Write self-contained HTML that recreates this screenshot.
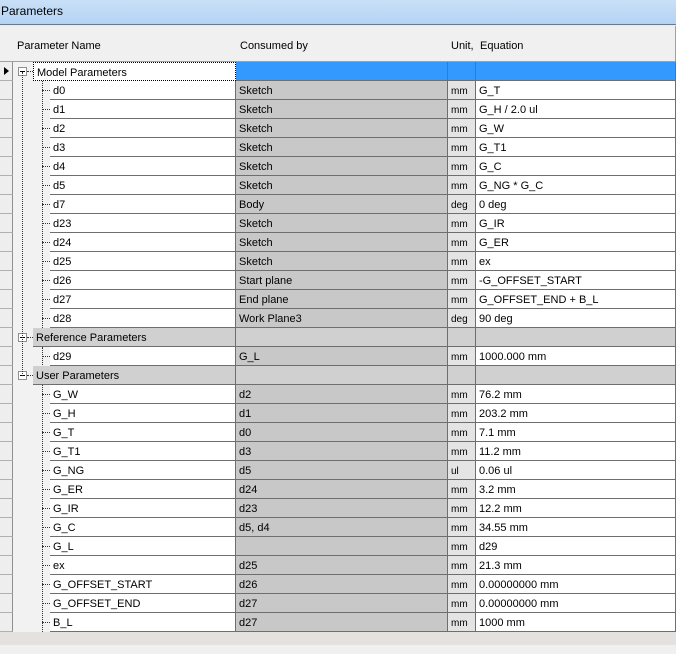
<!DOCTYPE html>
<html><head><meta charset="utf-8"><style>
*{box-sizing:border-box;margin:0;padding:0}
body{width:676px;height:654px;overflow:hidden;background:#ece9e4;font-family:"Liberation Sans",sans-serif;font-size:11px;color:#000;position:relative}
.title{position:absolute;left:0;top:0;width:676px;height:25px;background:linear-gradient(#c9e0f7,#b4d3f4);border-bottom:1px solid #6a7a8a;font-size:12px;padding:4px 0 0 1px}
.hdr{position:absolute;top:26px;height:36px;background:#f0f0f0;border-right:1px solid #a0a0a0;border-bottom:1px solid #a0a0a0;padding:14px 0 0 4px}
.rh{position:absolute;left:0;width:13px;height:19px;background:#eeeeee;border-bottom:1px solid #b0b0b0;border-right:1px solid #909090}
.tree{position:absolute;left:13px;top:62px;width:38px;height:570px;background:#f2f2f2}
.c{position:absolute;height:19px;border-right:1px solid #6e6e6e;border-bottom:1px solid #6e6e6e;padding:4px 0 0 3px;white-space:nowrap;overflow:hidden}
.n{background:#fff}
.cb{background:#c8c8c8}
.u{background:#e4e4e4;font-size:10px;padding-top:5px}
.e{background:#fff}
.g{background:#d0d0d0}
.sel{background:#3399ff}
.dl{position:absolute;border-left:1px dotted #333}
.dh{position:absolute;border-top:1px dotted #333;height:0}
.box{position:absolute;width:9px;height:9px;border:1px solid #909090;background:#fff}
.box:after{content:"";position:absolute;left:1px;top:3px;width:5px;height:1px;background:#000}
.bot{position:absolute;left:0;top:632px;width:676px;height:13px;background:#e4e2de}
.bot2{position:absolute;left:0;top:645px;width:676px;height:9px;background:#f0f0f0}
</style></head><body>
<div class="title">Parameters</div>
<div class="hdr" style="left:0;width:14px;padding:0"></div>
<div class="hdr" style="left:13px;width:224px">Parameter Name</div>
<div class="hdr" style="left:236px;width:213px">Consumed by</div>
<div class="hdr" style="left:448px;width:29px;padding-left:3px;overflow:hidden">Unit,</div>
<div class="hdr" style="left:476px;width:200px">Equation</div>
<div class="tree"></div>
<div class="bot"></div><div class="bot2"></div>
<div style="position:absolute;left:4px;top:67px;width:0;height:0;border-left:5px solid #000;border-top:4px solid transparent;border-bottom:4px solid transparent;z-index:3"></div>
<div id="g"></div>
<script>
const rows=[
['G','Model Parameters','','','',1],
['d0','Sketch','mm','G_T'],['d1','Sketch','mm','G_H / 2.0 ul'],['d2','Sketch','mm','G_W'],['d3','Sketch','mm','G_T1'],['d4','Sketch','mm','G_C'],['d5','Sketch','mm','G_NG * G_C'],['d7','Body','deg','0 deg'],['d23','Sketch','mm','G_IR'],['d24','Sketch','mm','G_ER'],['d25','Sketch','mm','ex'],['d26','Start plane','mm','-G_OFFSET_START'],['d27','End plane','mm','G_OFFSET_END + B_L'],['d28','Work Plane3','deg','90 deg'],
['G','Reference Parameters'],
['d29','G_L','mm','1000.000 mm'],
['G','User Parameters'],
['G_W','d2','mm','76.2 mm'],['G_H','d1','mm','203.2 mm'],['G_T','d0','mm','7.1 mm'],['G_T1','d3','mm','11.2 mm'],['G_NG','d5','ul','0.06 ul'],['G_ER','d24','mm','3.2 mm'],['G_IR','d23','mm','12.2 mm'],['G_C','d5, d4','mm','34.55 mm'],['G_L','','mm','d29'],['ex','d25','mm','21.3 mm'],['G_OFFSET_START','d26','mm','0.00000000 mm'],['G_OFFSET_END','d27','mm','0.00000000 mm'],['B_L','d27','mm','1000 mm']];
let h='';
rows.forEach((r,i)=>{const t=62+i*19;
h+=`<div class="rh" style="top:${t}px"></div>`;
if(r[0]==='G'){const s=r[5];
h+=`<div class="c ${s?'n':'g'}" style="left:33px;top:${t}px;width:203px;${s?'border:1px dotted #000;':''}">${r[1]}</div>`;
h+=`<div class="c ${s?'sel':'g'}" style="left:236px;top:${t}px;width:212px"></div>`;
h+=`<div class="c ${s?'sel':'g'}" style="left:448px;top:${t}px;width:28px"></div>`;
h+=`<div class="c ${s?'sel':'g'}" style="left:476px;top:${t}px;width:200px"></div>`;
h+=`<div class="dh" style="left:27px;top:${t+9}px;width:6px"></div><div class="box" style="left:18px;top:${t+5}px"></div>`;
}else{
h+=`<div class="c n" style="left:50px;top:${t}px;width:186px">${r[0]}</div>`;
h+=`<div class="c cb" style="left:236px;top:${t}px;width:212px">${r[1]}</div>`;
h+=`<div class="c u" style="left:448px;top:${t}px;width:28px">${r[2]}</div>`;
h+=`<div class="c e" style="left:476px;top:${t}px;width:200px">${r[3]}</div>`;
h+=`<div class="dh" style="left:42px;top:${t+9}px;width:8px"></div>`;}
});
h+=`<div class="dl" style="left:22px;top:72px;height:304px"></div>`;
h+=`<div class="dl" style="left:42px;top:81px;height:247px"></div>`;
h+=`<div class="dl" style="left:42px;top:347px;height:18px"></div>`;
h+=`<div class="dl" style="left:42px;top:385px;height:247px"></div>`;
document.getElementById('g').innerHTML=h;
</script>
</body></html>
